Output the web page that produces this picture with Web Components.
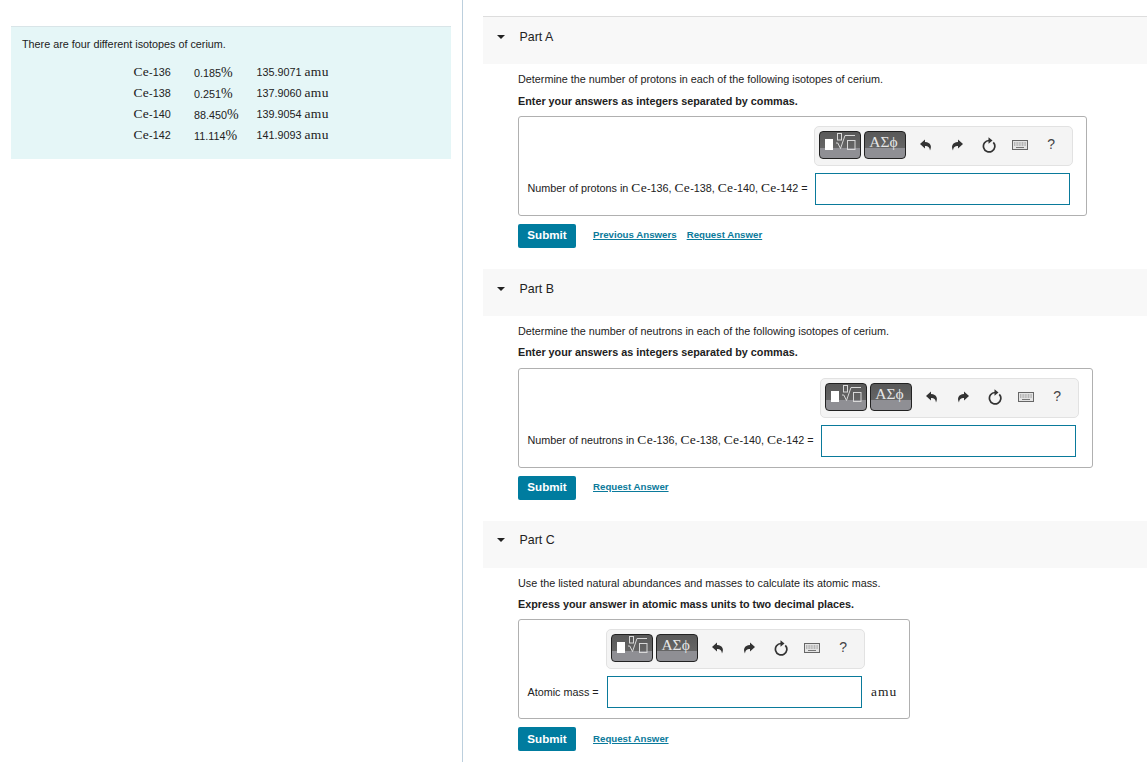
<!DOCTYPE html>
<html><head><meta charset="utf-8"><style>
html,body{margin:0;padding:0;background:#fff}
body{font-family:"Liberation Sans",Arial,sans-serif;color:#222;height:762px;overflow:hidden}
</style></head><body>
<quiz-page>
  <intro-panel slot="left"></intro-panel>
  <quiz-part slot="right" first name="Part A" q="Determine the number of protons in each of the following isotopes of cerium." hint="Enter your answers as integers separated by commas." prev>
    <answer-box label="Number of protons in " iso></answer-box>
  </quiz-part>
  <quiz-part slot="right" name="Part B" q="Determine the number of neutrons in each of the following isotopes of cerium." hint="Enter your answers as integers separated by commas.">
    <answer-box label="Number of neutrons in " iso></answer-box>
  </quiz-part>
  <quiz-part slot="right" last name="Part C" q="Use the listed natural abundances and masses to calculate its atomic mass." hint="Express your answer in atomic mass units to two decimal places.">
    <answer-box label="Atomic mass =" unit="amu"></answer-box>
  </quiz-part>
</quiz-page>
<script>
const SERIF='"Liberation Serif",serif';
const SER=`font-family:${SERIF};font-size:13.5px;letter-spacing:.3px;`;
class QuizPage extends HTMLElement{constructor(){super();this.attachShadow({mode:'open'}).innerHTML=`<style>
:host{display:flex;width:1147px;height:762px}
.l{width:462px;border-right:1px solid #bccfdd;padding:26px 0 0;flex:none}
.r{flex:1;padding:16px 0 0 20px;min-width:0}
</style><div class="l"><slot name="left"></slot></div><div class="r"><slot name="right"></slot></div>`}}
class IntroPanel extends HTMLElement{constructor(){super();
const rows=[['136','0.185','135.9071'],['138','0.251','137.9060'],['140','88.450','139.9054'],['142','11.114','141.9093']];
this.attachShadow({mode:'open'}).innerHTML=`<style>
:host{display:block;margin-left:11px;width:440px;height:133px;box-sizing:border-box;background:#e5f6f7;border-top:1px solid #d9e5e8;font-size:10.8px;color:#222;padding:11px 0 0 11px}
p{margin:0;line-height:12px}
.g{display:grid;grid-template-columns:60.500px 62.500px auto;grid-auto-rows:21px;margin:11px 0 0 111.500px;align-items:center;line-height:21px}
.s{${SER}}
.p{font-size:14px;font-family:${SERIF}}
.v{position:relative;top:1px}
</style><p>There are four different isotopes of cerium.</p><div class="g">${rows.map(r=>`<div><span class="s">Ce</span>-${r[0]}</div><div class="v">${r[1]}<span class="p">%</span></div><div>${r[2]} <span class="s">amu</span></div>`).join('')}</div>`}}
class QuizPart extends HTMLElement{constructor(){super();this.attachShadow({mode:'open'})}
connectedCallback(){const a=n=>this.getAttribute(n),first=this.hasAttribute('first'),last=this.hasAttribute('last');
this.shadowRoot.innerHTML=`<style>
:host{display:block;height:${first?253:252}px;box-sizing:border-box}
.h{height:${first?48:47}px;box-sizing:border-box;background:#f8f8f8;${first?'border-top:1px solid #ddd;':''}display:flex;align-items:flex-start;padding-top:${last?12:13}px;font-size:12.4px;line-height:14px;color:#222}
.t{width:0;height:0;border:4.500px solid transparent;border-top:4.500px solid #222;border-bottom:0;margin:5px 0 0 14px}
.n{margin-left:14.500px}
.b{padding-left:35px;font-size:10.8px;color:#222}
p{margin:0;line-height:13px}
.q{padding-top:9px}
.e{font-weight:bold;margin-top:${first?8.5:8}px;margin-bottom:${first?8:last?8:8.5}px}
.a{display:flex;align-items:center;margin-top:8px}
button{font:bold 11.6px "Liberation Sans",Arial,sans-serif;width:58px;height:24px;background:#007c9f;color:#fff;border:0;border-radius:2px;padding:0 0 2px;margin-right:17px}
a{font-weight:bold;font-size:9.7px;color:#0b7a9b;text-decoration:underline;margin:0 10px 2px 0}
</style><div class="h"><span class="t"></span><span class="n">${a('name')}</span></div>
<div class="b"><p class="q">${a('q')}</p><p class="e">${a('hint')}</p><slot></slot>
<div class="a"><button>Submit</button>${this.hasAttribute('prev')?'<a href="#">Previous Answers</a>':''}<a href="#">Request Answer</a></div></div>`}}
class MathToolbar extends HTMLElement{constructor(){super();this.attachShadow({mode:'open'}).innerHTML=`<style>
:host{display:flex;align-items:flex-start;width:259px;height:40px;box-sizing:border-box;background:#f4f4f4;border:1px solid #e2e2e2;border-radius:5px;padding:4px 0 0 4px}
.k{width:42px;height:28px;box-sizing:border-box;border:1px solid #222;border-radius:4px;background:linear-gradient(#595959 0,#656565 60%,#8f8f94 62%,#8f8f94 100%);margin-right:3px;display:flex;align-items:flex-start;justify-content:center;color:#e6e6e6;font:15.5px/20px ${SERIF};overflow:hidden;padding-right:3px}
.k.r{padding-right:0}
.k svg{display:block}
.i{display:flex;margin-left:1.500px}
.i>div{width:31.250px;height:28px;display:flex;align-items:center;justify-content:center}
.q{font-size:14px;color:#444;font-family:"Liberation Sans",sans-serif;position:relative;top:-1px}
</style>
<div class="k r"><svg width="40" height="26" viewBox="0 0 40 26"><rect x="5" y="7" width="8" height="11" fill="#fff"/><rect x="17.500" y="1.500" width="4" height="6.500" fill="none" stroke="#d8d8d8"/><path d="M16 11l1.800 0 2.700 5.500L25 3.500H35" fill="none" stroke="#d8d8d8"/><rect x="27.500" y="8.500" width="7.500" height="9" fill="none" stroke="#d8d8d8"/></svg></div>
<div class="k">ΑΣϕ</div>
<div class="i">
<div><svg width="12" height="12" viewBox="0 0 12 12"><path d="M5 .5L0 5l5 4.500V7c3 0 4.500 1 5 4.500 2-4 1-8-5-8.500z" fill="#333"/></svg></div>
<div><svg width="12" height="12" viewBox="0 0 12 12"><path d="M7 .5L12 5 7 9.500V7c-3 0-4.500 1-5 4.500-2-4-1-8 5-8.500z" fill="#333"/></svg></div>
<div><svg width="14" height="16" viewBox="0 0 14 16"><path d="M11.300 5.300A5.700 5.700 0 1 1 7 3.500" fill="none" stroke="#333" stroke-width="1.700"/><path d="M6.500 .2v6.600L10.500 3.500z" fill="#333"/></svg></div>
<div><svg width="16" height="10" viewBox="0 0 16 10"><rect x=".5" y=".5" width="15" height="9" fill="#e4e4e4" stroke="#666"/><path d="M2 3h12M2 5h12" stroke="#888" stroke-dasharray="1 .6"/><path d="M4 7.500h8" stroke="#777"/></svg></div>
<div><span class="q">?</span></div>
</div>`}}
class AnswerBox extends HTMLElement{constructor(){super();this.attachShadow({mode:'open'})}
connectedCallback(){const a=n=>this.getAttribute(n),unit=a('unit');
const c=`<span class="s">Ce</span>`;
const lab=a('label')+(this.hasAttribute('iso')?`${c}-136, ${c}-138, ${c}-140, ${c}-142 =`:'');
this.shadowRoot.innerHTML=`<style>
:host{display:block;width:fit-content}
.box{display:grid;grid-template-columns:auto 255px auto;row-gap:7px;align-content:start;box-sizing:border-box;height:100px;border:1px solid #b0b0b0;border-radius:3px;padding:9px ${unit?12:16}px 0 8.500px;font-size:10.8px;color:#222;background:#fff;align-items:center}
math-toolbar{grid-column:2;margin-left:-1px}
.l{grid-column:1;white-space:pre;padding-right:${unit?8.5:7.5}px;padding-bottom:${unit?0:2}px}
.s{${SER}}
.in{width:255px;height:32px;box-sizing:border-box;border:1px solid #0a7a9b;background:#fff}
.u{${SER}letter-spacing:.9px;padding-left:9px}
</style><div class="box"><math-toolbar></math-toolbar><span class="l">${lab}</span><div class="in"></div>${unit?`<span class="u">${unit}</span>`:''}</div>`}}
customElements.define('math-toolbar',MathToolbar);
customElements.define('answer-box',AnswerBox);
customElements.define('quiz-page',QuizPage);
customElements.define('intro-panel',IntroPanel);
customElements.define('quiz-part',QuizPart);
</script>
</body></html>
